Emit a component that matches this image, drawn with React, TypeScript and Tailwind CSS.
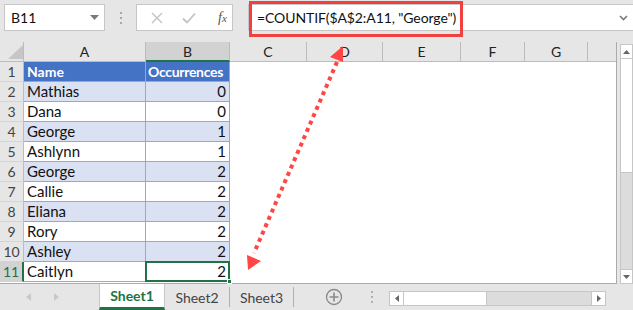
import React from 'react';

const font = { fontFamily: 'Lato, "Liberation Sans", sans-serif' };

const cols = ['A', 'B', 'C', 'D', 'E', 'F', 'G'];
const colWidths = ['w-[122px]', 'w-[84px]', 'w-[77px]', 'w-[76px]', 'w-[78px]', 'w-[64px]', 'w-[63px]'];

const rows: [string, number][] = [
  ['Mathias', 0],
  ['Dana', 0],
  ['George', 1],
  ['Ashlynn', 1],
  ['George', 2],
  ['Callie', 2],
  ['Eliana', 2],
  ['Rory', 2],
  ['Ashley', 2],
  ['Caitlyn', 2],
];

const RowHeader: React.FC<{ n: number; selected?: boolean }> = ({ n, selected }) => (
  <div
    className={`flex h-[20px] w-[24px] shrink-0 items-center justify-center border-b border-[#d4d4d4] text-[14px] ${
      selected ? 'border-r-2 border-r-[#217346] bg-[#d2d2d2] text-[#217346]' : 'border-r border-r-[#bcbcbc] bg-[#e6e6e6] text-[#444]'
    }`}
  >
    {n}
  </div>
);

export default function App() {
  return (
    <div className="relative h-[310px] w-[633px] overflow-hidden bg-[#e6e6e6] text-[#111]" style={font}>
      {/* toolbar */}
      <div className="flex h-[42px] items-start pt-[4px]">
        <div className="ml-[4px] flex h-[27px] w-[101px] items-center justify-between border border-[#c6c6c6] bg-white pl-[6px] pr-[5px] text-[14px]">
          <span>B11</span>
          <svg width="9" height="5" viewBox="0 0 9 5">
            <path d="M0 0h9L4.5 5z" fill="#7a7a7a" />
          </svg>
        </div>
        <div className="flex h-[27px] w-[31px] flex-col items-center justify-center gap-[3px]">
          <span className="h-[2px] w-[2px] bg-[#a8a8a8]" />
          <span className="h-[2px] w-[2px] bg-[#a8a8a8]" />
          <span className="h-[2px] w-[2px] bg-[#a8a8a8]" />
        </div>
        <div className="flex h-[27px] w-[97px] items-center border border-[#c6c6c6] bg-white">
          <svg className="ml-[14px]" width="12" height="12" viewBox="0 0 12 12">
            <path d="M1 1l10 10M11 1L1 11" stroke="#c2c2c2" strokeWidth="1.4" />
          </svg>
          <svg className="ml-[19px]" width="14" height="12" viewBox="0 0 14 12">
            <path d="M1 6.5l4 4L13 1.5" stroke="#c2c2c2" strokeWidth="1.8" fill="none" />
          </svg>
          <span className="ml-[22px] text-[14px] italic text-[#555]" style={{ fontFamily: '"Liberation Serif", serif' }}>
            f<span className="text-[11px]">x</span>
          </span>
        </div>
        <div className="ml-[15px] flex h-[27px] flex-1 items-center justify-between border border-r-0 border-[#c6c6c6] bg-white pl-[8px] pr-[5px] text-[14px] tracking-[-0.1px]">
          <span>=COUNTIF($A$2:A11, "George")</span>
          <svg width="9" height="6" viewBox="0 0 9 6">
            <path d="M1 1l3.5 3.5L8 1" stroke="#7a7a7a" strokeWidth="1.6" fill="none" />
          </svg>
        </div>
      </div>

      {/* grid */}
      <div className="flex h-[242px]">
        <div className="flex w-[617px] flex-col border-r border-b border-[#ababab] bg-white">
          {/* column header */}
          <div className="flex h-[20px] bg-[#e6e6e6]">
            <div className="relative w-[24px] shrink-0 border-r border-b border-[#bcbcbc]">
              <svg className="absolute left-[8px] top-[3px]" width="15" height="14" viewBox="0 0 15 14">
                <path d="M15 0v14H0z" fill="#c6c6c6" />
              </svg>
            </div>
            {cols.map((c, i) => (
              <div
                key={c}
                className={`${colWidths[i]} flex shrink-0 items-center justify-center border-r text-[14px] ${
                  c === 'B'
                    ? 'border-b-2 border-r-[#bcbcbc] border-b-[#217346] bg-[#d2d2d2] text-[#222]'
                    : 'border-b border-[#bcbcbc] text-[#222]'
                }`}
              >
                {c}
              </div>
            ))}
            <div className="flex-1 border-b border-[#bcbcbc]" />
          </div>
          {/* header row */}
          <div className="flex">
            <RowHeader n={1} />
            <div className="flex h-[20px] w-[122px] items-center border-r border-b border-[#8ea9db] bg-[#4472c4] pl-[3px] text-[14px] font-bold text-white">
              Name
            </div>
            <div className="flex h-[20px] w-[84px] items-center overflow-hidden whitespace-nowrap border-r border-b border-[#8ea9db] bg-[#4472c4] pl-[2px] text-[14px] font-bold tracking-[-0.3px] text-white">
              Occurrences
            </div>
          </div>
          {rows.map(([name, count], i) => {
            const n = i + 2;
            const band = n % 2 === 0 ? 'bg-[#d9e1f2]' : 'bg-white';
            const last = n === 11;
            return (
              <div key={n} className="flex">
                <RowHeader n={n} selected={last} />
                <div className={`flex h-[20px] w-[122px] items-center border-r border-b border-[#8ea9db] ${band} pl-[3px] text-[15px]`}>
                  {name}
                </div>
                <div
                  className={`relative flex h-[20px] w-[84px] items-center justify-end border-r border-b border-[#8ea9db] ${band} pr-[3px] text-[15px]`}
                >
                  {count}
                  {last && (
                    <>
                      <div className="absolute -left-[1px] -top-[1px] h-[21px] w-[85px] border-2 border-[#217346]" />
                      <div className="absolute -bottom-[3px] -right-[3px] h-[5px] w-[5px] border border-white bg-[#217346]" />
                    </>
                  )}
                </div>
              </div>
            );
          })}
        </div>
        {/* vertical scrollbar */}
        <div className="ml-[3px] mt-[2px] flex w-[13px] flex-col border border-[#c6c6c6] bg-[#dcdcdc]">
          <div className="flex h-[14px] items-center justify-center border-b border-[#c6c6c6] bg-white">
            <svg width="7" height="4" viewBox="0 0 7 4">
              <path d="M3.5 0L7 4H0z" fill="#666" />
            </svg>
          </div>
          <div className="h-[114px] border-b border-[#c6c6c6] bg-white" />
          <div className="flex-1" />
          <div className="flex h-[14px] items-center justify-center border-t border-[#c6c6c6] bg-white">
            <svg width="7" height="4" viewBox="0 0 7 4">
              <path d="M0 0h7L3.5 4z" fill="#666" />
            </svg>
          </div>
        </div>
      </div>

      {/* sheet tabs */}
      <div className="flex h-[26px] items-stretch text-[14px]">
        <div className="flex w-[99px] items-center">
          <svg className="ml-[26px]" width="5" height="8" viewBox="0 0 5 8">
            <path d="M5 0v8L0 4z" fill="#c8c8c8" />
          </svg>
          <svg className="ml-[23px]" width="5" height="8" viewBox="0 0 5 8">
            <path d="M0 0v8l5-4z" fill="#c8c8c8" />
          </svg>
        </div>
        <div className="flex w-[66px] items-center justify-center border-x border-[#c6c6c6] border-b-[3px] border-b-[#217346] bg-white font-bold text-[#217346]">
          Sheet1
        </div>
        <div className="my-[3px] flex w-[65px] items-center justify-center border-r border-[#b0b0b0] text-[#444]">Sheet2</div>
        <div className="my-[3px] flex w-[64px] items-center justify-center border-r border-[#b0b0b0] text-[#444]">Sheet3</div>
        <div className="ml-[31px] flex items-center">
          <svg width="18" height="18" viewBox="0 0 18 18">
            <circle cx="9" cy="9" r="7.5" stroke="#8a8a8a" strokeWidth="1.3" fill="none" />
            <path d="M9 4.5v9M4.5 9h9" stroke="#8a8a8a" strokeWidth="1.6" />
          </svg>
        </div>
        <div className="ml-[28px] flex flex-col items-center justify-center gap-[3px]">
          <span className="h-[2px] w-[2px] bg-[#b0b0b0]" />
          <span className="h-[2px] w-[2px] bg-[#b0b0b0]" />
          <span className="h-[2px] w-[2px] bg-[#b0b0b0]" />
        </div>
        <div className="ml-[16px] mt-[7px] flex h-[15px] w-[217px] border border-[#c6c6c6] bg-[#dcdcdc]">
          <div className="flex w-[14px] items-center justify-center border-r border-[#c6c6c6] bg-white">
            <svg width="4" height="7" viewBox="0 0 4 7">
              <path d="M4 0v7L0 3.5z" fill="#666" />
            </svg>
          </div>
          <div className="w-[83px] border-r border-[#c6c6c6] bg-white" />
          <div className="flex-1" />
          <div className="flex w-[14px] items-center justify-center border-l border-[#c6c6c6] bg-white">
            <svg width="4" height="7" viewBox="0 0 4 7">
              <path d="M0 0v7l4-3.5z" fill="#666" />
            </svg>
          </div>
        </div>
      </div>

      {/* callout: red box and dotted arrow */}
      <div className="pointer-events-none absolute left-[249px] top-[1px] h-[36px] w-[214px] border-[3px] border-[#f04040]" />
      <svg className="pointer-events-none absolute left-0 top-0" width="633" height="310" viewBox="0 0 633 310">
        <path d="M337 62L254 253" stroke="#ff4545" strokeWidth="4" strokeDasharray="4 4" />
        <path d="M343 46L330 57L343 62z" fill="#ff4545" />
        <path d="M248 270L247 255L261 261z" fill="#ff4545" />
      </svg>
    </div>
  );
}
